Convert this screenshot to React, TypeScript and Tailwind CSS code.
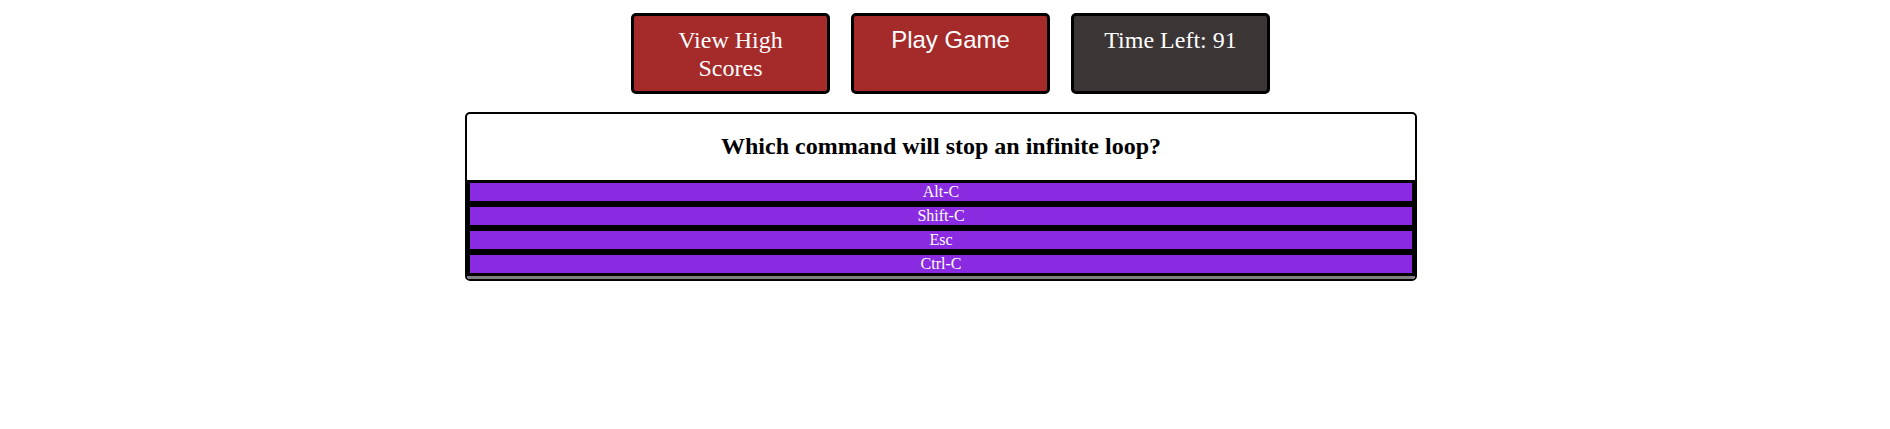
import React from "react";

const answers = ["Alt-C", "Shift-C", "Esc", "Ctrl-C"];

export default function App() {
  return (
    <div className="w-full h-[429px] bg-white pt-[13px] font-['Liberation_Serif',serif]">
      <div className="flex gap-[21px] ml-[631px]">
        <button className="w-[199px] h-[81px] border-[3px] border-black rounded-[5px] bg-[#a52a2a] text-white text-[24px] leading-[28px] px-5 pt-[10px] flex items-start justify-center text-center font-['Liberation_Serif',serif]">
          View High Scores
        </button>
        <button className="w-[199px] h-[81px] border-[3px] border-black rounded-[5px] bg-[#a52a2a] text-white text-[24px] leading-[28px] px-5 pt-[10px] flex items-start justify-center text-center font-['Liberation_Sans',Arial,sans-serif]">
          Play Game
        </button>
        <div className="w-[199px] h-[81px] border-[3px] border-black rounded-[5px] bg-[#3b3535] text-white text-[24px] leading-[28px] px-5 pt-[10px] flex items-start justify-center text-center">
          Time Left: 91
        </div>
      </div>
      <div className="mt-[18px] ml-[465px] w-[952px] border-2 border-black rounded-[5px] overflow-hidden">
        <div className="h-[66px] flex items-center justify-center pb-[3px]">
          <h2 className="text-[24px] font-bold text-black leading-[28px]">
            Which command will stop an infinite loop?
          </h2>
        </div>
        {answers.map((a) => (
          <button
            key={a}
            className="block w-full h-[24px] border-[3px] border-black bg-[#8a2be2] text-white text-[16px] leading-[18px] text-center font-['Liberation_Serif',serif]"
          >
            {a}
          </button>
        ))}
        <div className="h-[3px] bg-[#808080]" />
      </div>
    </div>
  );
}
